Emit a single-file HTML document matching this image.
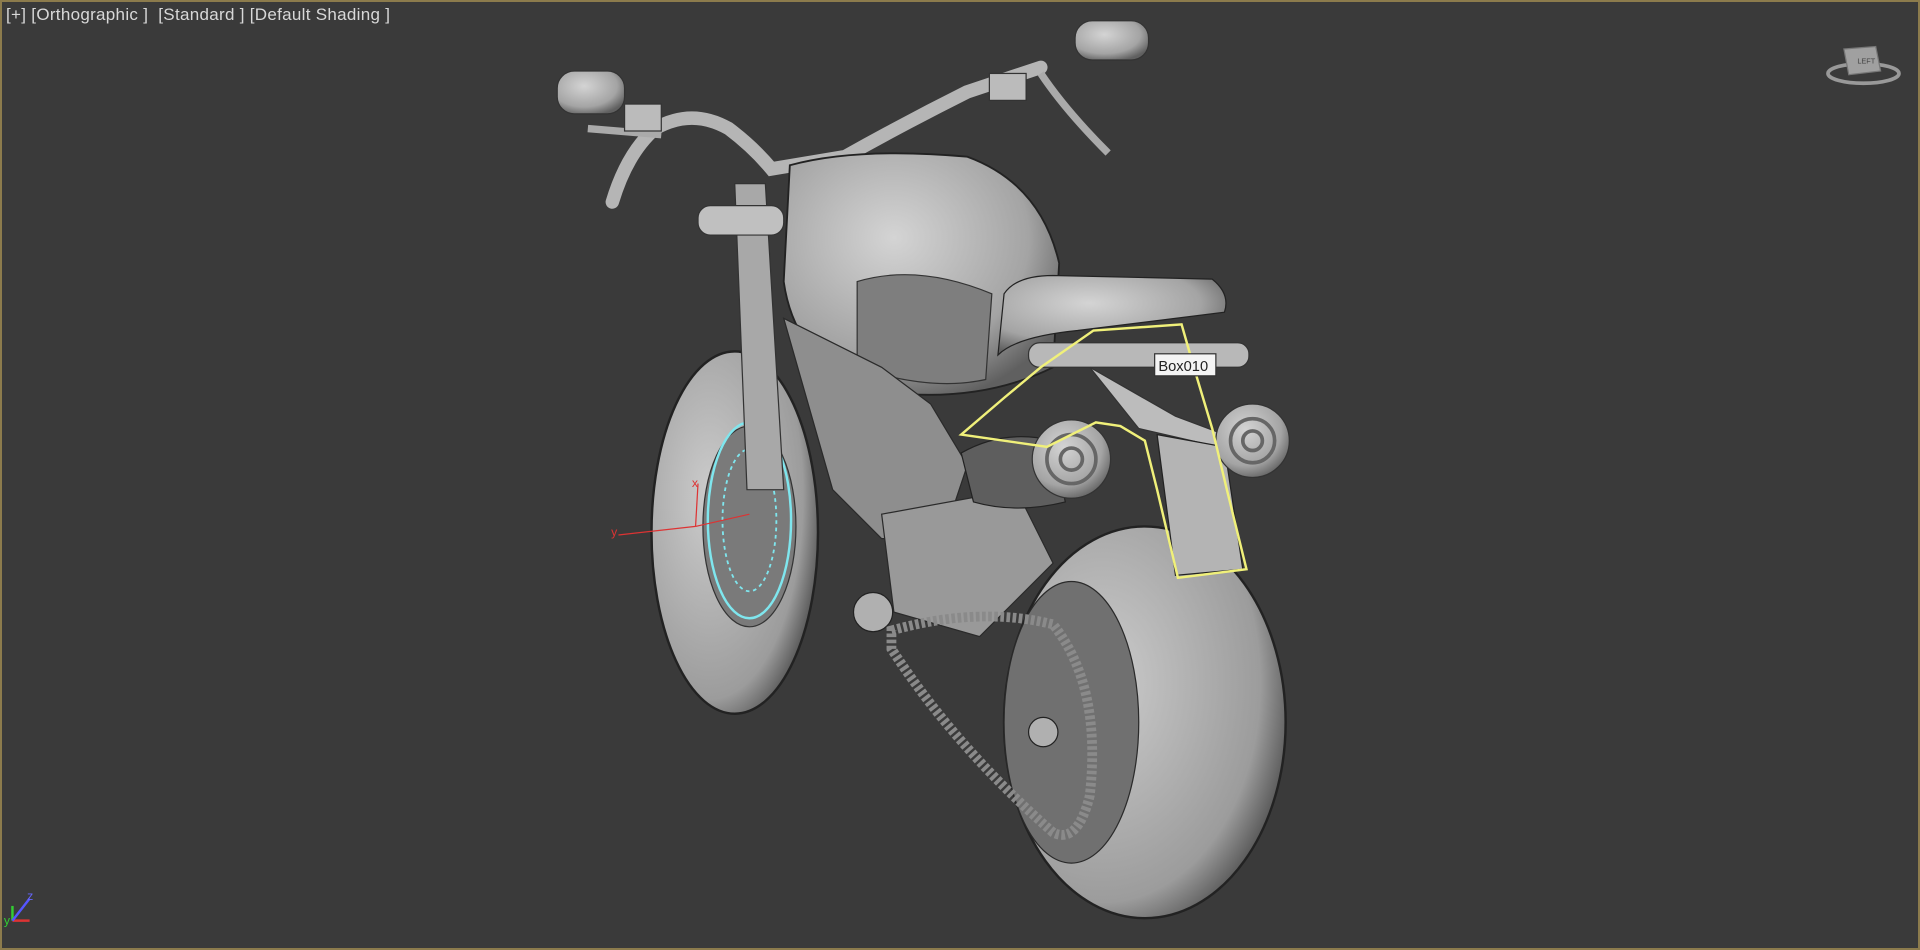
<!DOCTYPE html>
<html><head><style>
html,body{margin:0;padding:0;background:#3a3a3a;overflow:hidden}
.vp{position:absolute;left:0;top:0;width:1916px;height:946px;border:2px solid #8c7b4c;background:#3a3a3a}
.lbl{position:absolute;left:6px;top:5px;font:17px "Liberation Sans",sans-serif;color:#d8d8d8;white-space:pre;letter-spacing:0.3px}
svg{position:absolute;left:0;top:0}
</style></head><body>
<div class="vp"></div>
<svg width="1920" height="950" viewBox="0 0 1568 776">
<defs>
<radialGradient id="g" cx="40%" cy="35%" r="70%"><stop offset="0" stop-color="#d4d4d4"/><stop offset="0.7" stop-color="#a4a4a4"/><stop offset="1" stop-color="#606060"/></radialGradient>
<radialGradient id="w" cx="35%" cy="40%" r="70%"><stop offset="0" stop-color="#cccccc"/><stop offset="0.8" stop-color="#9c9c9c"/><stop offset="1" stop-color="#505050"/></radialGradient>
</defs>
<!-- front wheel -->
<ellipse cx="600" cy="435" rx="68" ry="148" fill="url(#w)" stroke="#222" stroke-width="2"/>
<ellipse cx="612" cy="430" rx="38" ry="82" fill="#7a7a7a" stroke="#333"/>
<ellipse cx="612" cy="425" rx="34" ry="80" fill="none" stroke="#7fe6ee" stroke-width="2"/>
<ellipse cx="612" cy="425" rx="22" ry="58" fill="none" stroke="#7fe6ee" stroke-width="1.5" stroke-dasharray="3 3"/>
<!-- handlebars -->
<path d="M500 165 Q512 125 535 105 Q565 88 595 105 Q615 120 630 138 L690 128 Q740 100 790 75 L850 55" fill="none" stroke="#b5b5b5" stroke-width="11" stroke-linecap="round"/>
<path d="M850 60 Q870 90 905 125" fill="none" stroke="#aaa" stroke-width="6"/>
<path d="M480 105 L540 110" fill="none" stroke="#aaa" stroke-width="6"/>
<rect x="455" y="58" width="55" height="35" rx="14" fill="url(#g)" stroke="#333"/>
<rect x="878" y="17" width="60" height="32" rx="14" fill="url(#g)" stroke="#333"/>
<rect x="510" y="85" width="30" height="22" fill="#bbb" stroke="#333"/>
<rect x="808" y="60" width="30" height="22" fill="#bbb" stroke="#333"/>
<!-- fork -->
<path d="M600 150 L625 150 L640 400 L610 400 Z" fill="#a8a8a8" stroke="#333"/>
<rect x="570" y="168" width="70" height="24" rx="10" fill="#c0c0c0" stroke="#333"/>
<!-- tank -->
<path d="M645 135 Q700 120 790 128 Q850 150 865 215 L860 300 Q800 330 720 320 Q650 300 640 230 Z" fill="url(#g)" stroke="#222" stroke-width="1.5"/>
<path d="M700 230 Q750 215 810 240 L805 310 Q760 320 700 300 Z" fill="#7e7e7e" stroke="#333"/>
<!-- frame/engine -->
<path d="M640 260 L720 300 L760 330 L790 380 L770 440 L720 440 L680 400 Z" fill="#8e8e8e" stroke="#2a2a2a"/>
<path d="M720 420 L830 400 L860 460 L800 520 L730 500 Z" fill="#999" stroke="#2a2a2a"/>
<circle cx="713" cy="500" r="16" fill="#b0b0b0" stroke="#222"/>
<path d="M785 370 Q820 350 860 360 L870 410 Q830 420 795 410 Z" fill="#5e5e5e" stroke="#222"/>
<!-- rear wheel -->
<ellipse cx="935" cy="590" rx="115" ry="160" fill="url(#w)" stroke="#222" stroke-width="2"/>
<ellipse cx="875" cy="590" rx="55" ry="115" fill="#707070" stroke="#2a2a2a"/>
<circle cx="852" cy="598" r="12" fill="#b0b0b0" stroke="#222"/>
<!-- chain -->
<path d="M728 515 Q800 495 860 510 Q900 560 890 650 Q880 690 860 680 Q780 610 728 530 Z" fill="none" stroke="#8a8a8a" stroke-width="8" stroke-dasharray="3 2"/>
<!-- seat & tail -->
<path d="M820 240 Q830 225 860 225 L990 228 Q1005 240 1000 255 L880 270 Q830 275 815 290 Z" fill="url(#g)" stroke="#222"/>
<rect x="840" y="280" width="180" height="20" rx="9" fill="#b8b8b8" stroke="#333"/>
<path d="M890 300 L960 340 L1000 355 L995 365 L930 350 Z" fill="#bcbcbc" stroke="#333"/>
<path d="M945 355 L1000 365 L1015 465 L960 470 Z" fill="#b4b4b4" stroke="#222"/>
<circle cx="875" cy="375" r="32" fill="url(#g)" stroke="#333"/>
<circle cx="875" cy="375" r="20" fill="none" stroke="#666" stroke-width="3"/>
<circle cx="875" cy="375" r="9" fill="none" stroke="#666" stroke-width="3"/>
<circle cx="1023" cy="360" r="30" fill="url(#g)" stroke="#333"/>
<circle cx="1023" cy="360" r="18" fill="none" stroke="#666" stroke-width="3"/>
<circle cx="1023" cy="360" r="8" fill="none" stroke="#666" stroke-width="3"/>
<!-- selection outline -->
<path d="M893 270 L965 265 L975 300 L990 350 L1002 400 L1018 465 L962 472 L945 400 L935 360 L915 348 L895 345 L855 365 L785 355 L820 325 L850 300 Z" fill="none" stroke="#f0f07a" stroke-width="2"/>
<rect x="943" y="289" width="50" height="18" fill="#f4f4f4" stroke="#333"/>
<text x="946" y="303" font-family="Liberation Sans" font-size="12" fill="#222">Box010</text>
<!-- gizmo -->
<line x1="568" y1="430" x2="505" y2="437" stroke="#d33" stroke-width="1"/>
<line x1="568" y1="430" x2="612" y2="420" stroke="#d33" stroke-width="1"/>
<line x1="568" y1="430" x2="570" y2="395" stroke="#d33" stroke-width="1"/>
<text x="499" y="438" font-family="Liberation Sans" font-size="10" fill="#d33">y</text>
<text x="565" y="398" font-family="Liberation Sans" font-size="10" fill="#d33">x</text>
<!-- axis tripod -->
<line x1="10" y1="752" x2="24" y2="752" stroke="#d33" stroke-width="2"/>
<line x1="10" y1="752" x2="10" y2="740" stroke="#3c3" stroke-width="2"/>
<line x1="10" y1="752" x2="24" y2="734" stroke="#55f" stroke-width="2"/>
<text x="22" y="735" font-family="Liberation Sans" font-size="10" fill="#66f">z</text>
<text x="3" y="755" font-family="Liberation Sans" font-size="10" fill="#3c3">y</text>
<!-- viewcube -->
<ellipse cx="1522" cy="60" rx="29" ry="8" fill="none" stroke="#999" stroke-width="3"/>
<path d="M1506 40 L1532 38 L1536 58 L1510 61 Z" fill="#a0a0a0" stroke="#777"/>
<text x="1517" y="52" font-family="Liberation Sans" font-size="6" fill="#444">LEFT</text>
</svg>
<div class="lbl">[+] [Orthographic ]  [Standard ] [Default Shading ]</div>
</body></html>
